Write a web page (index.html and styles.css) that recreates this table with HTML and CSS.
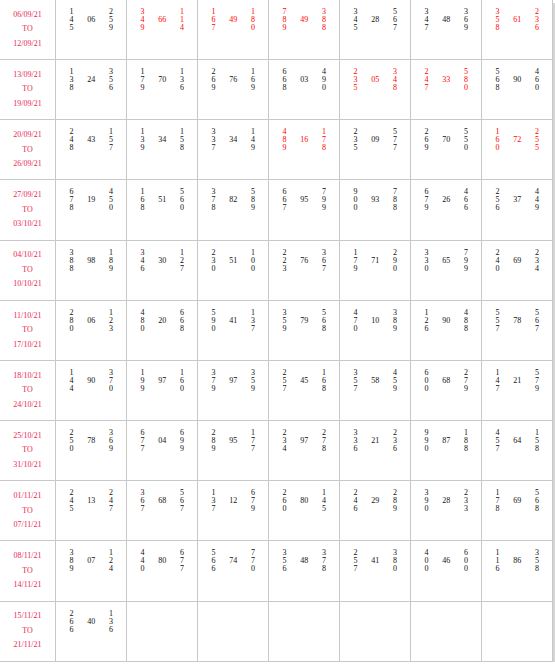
FILE: index.html
```html
<!DOCTYPE html>
<html>
<head>
<meta charset="utf-8">
<title>Chart</title>
<link rel="stylesheet" href="styles.css">
</head>
<body>
<div class="chart">
  <div class="date">06/09/21<br>TO<br>12/09/21</div>
  <div class="cell"><div class="stack">1<br>4<br>5</div><div class="mid">06</div><div class="stack">2<br>5<br>9</div></div>
  <div class="cell hot"><div class="stack">3<br>4<br>9</div><div class="mid">66</div><div class="stack">1<br>1<br>4</div></div>
  <div class="cell hot"><div class="stack">1<br>6<br>7</div><div class="mid">49</div><div class="stack">1<br>8<br>0</div></div>
  <div class="cell hot"><div class="stack">7<br>8<br>9</div><div class="mid">49</div><div class="stack">3<br>8<br>8</div></div>
  <div class="cell"><div class="stack">3<br>4<br>5</div><div class="mid">28</div><div class="stack">5<br>6<br>7</div></div>
  <div class="cell"><div class="stack">3<br>4<br>7</div><div class="mid">48</div><div class="stack">3<br>6<br>9</div></div>
  <div class="cell hot"><div class="stack">3<br>5<br>8</div><div class="mid">61</div><div class="stack">2<br>3<br>6</div></div>

  <div class="date">13/09/21<br>TO<br>19/09/21</div>
  <div class="cell"><div class="stack">1<br>3<br>8</div><div class="mid">24</div><div class="stack">3<br>5<br>6</div></div>
  <div class="cell"><div class="stack">1<br>7<br>9</div><div class="mid">70</div><div class="stack">1<br>3<br>6</div></div>
  <div class="cell"><div class="stack">2<br>6<br>9</div><div class="mid">76</div><div class="stack">1<br>6<br>9</div></div>
  <div class="cell"><div class="stack">6<br>6<br>8</div><div class="mid">03</div><div class="stack">4<br>9<br>0</div></div>
  <div class="cell hot"><div class="stack">2<br>3<br>5</div><div class="mid">05</div><div class="stack">3<br>4<br>8</div></div>
  <div class="cell hot"><div class="stack">2<br>4<br>7</div><div class="mid">33</div><div class="stack">5<br>8<br>0</div></div>
  <div class="cell"><div class="stack">5<br>6<br>8</div><div class="mid">90</div><div class="stack">4<br>6<br>0</div></div>

  <div class="date">20/09/21<br>TO<br>26/09/21</div>
  <div class="cell"><div class="stack">2<br>4<br>8</div><div class="mid">43</div><div class="stack">1<br>5<br>7</div></div>
  <div class="cell"><div class="stack">1<br>3<br>9</div><div class="mid">34</div><div class="stack">1<br>5<br>8</div></div>
  <div class="cell"><div class="stack">3<br>3<br>7</div><div class="mid">34</div><div class="stack">1<br>4<br>9</div></div>
  <div class="cell hot"><div class="stack">4<br>8<br>9</div><div class="mid">16</div><div class="stack">1<br>7<br>8</div></div>
  <div class="cell"><div class="stack">2<br>3<br>5</div><div class="mid">09</div><div class="stack">5<br>7<br>7</div></div>
  <div class="cell"><div class="stack">2<br>6<br>9</div><div class="mid">70</div><div class="stack">5<br>5<br>0</div></div>
  <div class="cell hot"><div class="stack">1<br>6<br>0</div><div class="mid">72</div><div class="stack">2<br>5<br>5</div></div>

  <div class="date">27/09/21<br>TO<br>03/10/21</div>
  <div class="cell"><div class="stack">6<br>7<br>8</div><div class="mid">19</div><div class="stack">4<br>5<br>0</div></div>
  <div class="cell"><div class="stack">1<br>6<br>8</div><div class="mid">51</div><div class="stack">5<br>6<br>0</div></div>
  <div class="cell"><div class="stack">3<br>7<br>8</div><div class="mid">82</div><div class="stack">5<br>8<br>9</div></div>
  <div class="cell"><div class="stack">6<br>6<br>7</div><div class="mid">95</div><div class="stack">7<br>9<br>9</div></div>
  <div class="cell"><div class="stack">9<br>0<br>0</div><div class="mid">93</div><div class="stack">7<br>8<br>8</div></div>
  <div class="cell"><div class="stack">6<br>7<br>9</div><div class="mid">26</div><div class="stack">4<br>6<br>6</div></div>
  <div class="cell"><div class="stack">2<br>5<br>6</div><div class="mid">37</div><div class="stack">4<br>4<br>9</div></div>

  <div class="date">04/10/21<br>TO<br>10/10/21</div>
  <div class="cell"><div class="stack">3<br>8<br>8</div><div class="mid">98</div><div class="stack">1<br>8<br>9</div></div>
  <div class="cell"><div class="stack">3<br>4<br>6</div><div class="mid">30</div><div class="stack">1<br>2<br>7</div></div>
  <div class="cell"><div class="stack">2<br>3<br>0</div><div class="mid">51</div><div class="stack">1<br>0<br>0</div></div>
  <div class="cell"><div class="stack">2<br>2<br>3</div><div class="mid">76</div><div class="stack">3<br>6<br>7</div></div>
  <div class="cell"><div class="stack">1<br>7<br>9</div><div class="mid">71</div><div class="stack">2<br>9<br>0</div></div>
  <div class="cell"><div class="stack">3<br>3<br>0</div><div class="mid">65</div><div class="stack">7<br>9<br>9</div></div>
  <div class="cell"><div class="stack">2<br>4<br>0</div><div class="mid">69</div><div class="stack">2<br>3<br>4</div></div>

  <div class="date">11/10/21<br>TO<br>17/10/21</div>
  <div class="cell"><div class="stack">2<br>8<br>0</div><div class="mid">06</div><div class="stack">1<br>2<br>3</div></div>
  <div class="cell"><div class="stack">4<br>8<br>0</div><div class="mid">20</div><div class="stack">6<br>6<br>8</div></div>
  <div class="cell"><div class="stack">5<br>9<br>0</div><div class="mid">41</div><div class="stack">1<br>3<br>7</div></div>
  <div class="cell"><div class="stack">3<br>5<br>9</div><div class="mid">79</div><div class="stack">5<br>6<br>8</div></div>
  <div class="cell"><div class="stack">4<br>7<br>0</div><div class="mid">10</div><div class="stack">3<br>8<br>9</div></div>
  <div class="cell"><div class="stack">1<br>2<br>6</div><div class="mid">90</div><div class="stack">4<br>8<br>8</div></div>
  <div class="cell"><div class="stack">5<br>5<br>7</div><div class="mid">78</div><div class="stack">5<br>6<br>7</div></div>

  <div class="date">18/10/21<br>TO<br>24/10/21</div>
  <div class="cell"><div class="stack">1<br>4<br>4</div><div class="mid">90</div><div class="stack">3<br>7<br>0</div></div>
  <div class="cell"><div class="stack">1<br>9<br>9</div><div class="mid">97</div><div class="stack">1<br>6<br>0</div></div>
  <div class="cell"><div class="stack">3<br>7<br>9</div><div class="mid">97</div><div class="stack">3<br>5<br>9</div></div>
  <div class="cell"><div class="stack">2<br>5<br>7</div><div class="mid">45</div><div class="stack">1<br>6<br>8</div></div>
  <div class="cell"><div class="stack">3<br>5<br>7</div><div class="mid">58</div><div class="stack">4<br>5<br>9</div></div>
  <div class="cell"><div class="stack">6<br>0<br>0</div><div class="mid">68</div><div class="stack">2<br>7<br>9</div></div>
  <div class="cell"><div class="stack">1<br>4<br>7</div><div class="mid">21</div><div class="stack">5<br>7<br>9</div></div>

  <div class="date">25/10/21<br>TO<br>31/10/21</div>
  <div class="cell"><div class="stack">2<br>5<br>0</div><div class="mid">78</div><div class="stack">3<br>6<br>9</div></div>
  <div class="cell"><div class="stack">6<br>7<br>7</div><div class="mid">04</div><div class="stack">6<br>9<br>9</div></div>
  <div class="cell"><div class="stack">2<br>8<br>9</div><div class="mid">95</div><div class="stack">1<br>7<br>7</div></div>
  <div class="cell"><div class="stack">2<br>3<br>4</div><div class="mid">97</div><div class="stack">2<br>7<br>8</div></div>
  <div class="cell"><div class="stack">3<br>3<br>6</div><div class="mid">21</div><div class="stack">2<br>3<br>6</div></div>
  <div class="cell"><div class="stack">9<br>9<br>0</div><div class="mid">87</div><div class="stack">1<br>8<br>8</div></div>
  <div class="cell"><div class="stack">4<br>5<br>7</div><div class="mid">64</div><div class="stack">1<br>5<br>8</div></div>

  <div class="date">01/11/21<br>TO<br>07/11/21</div>
  <div class="cell"><div class="stack">2<br>4<br>5</div><div class="mid">13</div><div class="stack">2<br>4<br>7</div></div>
  <div class="cell"><div class="stack">3<br>6<br>7</div><div class="mid">68</div><div class="stack">5<br>6<br>7</div></div>
  <div class="cell"><div class="stack">1<br>3<br>7</div><div class="mid">12</div><div class="stack">6<br>7<br>9</div></div>
  <div class="cell"><div class="stack">2<br>6<br>0</div><div class="mid">80</div><div class="stack">1<br>4<br>5</div></div>
  <div class="cell"><div class="stack">2<br>4<br>6</div><div class="mid">29</div><div class="stack">2<br>8<br>9</div></div>
  <div class="cell"><div class="stack">3<br>9<br>0</div><div class="mid">28</div><div class="stack">2<br>3<br>3</div></div>
  <div class="cell"><div class="stack">1<br>7<br>8</div><div class="mid">69</div><div class="stack">5<br>6<br>8</div></div>

  <div class="date">08/11/21<br>TO<br>14/11/21</div>
  <div class="cell"><div class="stack">3<br>8<br>9</div><div class="mid">07</div><div class="stack">1<br>2<br>4</div></div>
  <div class="cell"><div class="stack">4<br>4<br>0</div><div class="mid">80</div><div class="stack">6<br>7<br>7</div></div>
  <div class="cell"><div class="stack">5<br>6<br>6</div><div class="mid">74</div><div class="stack">7<br>7<br>0</div></div>
  <div class="cell"><div class="stack">3<br>5<br>6</div><div class="mid">48</div><div class="stack">3<br>7<br>8</div></div>
  <div class="cell"><div class="stack">2<br>5<br>7</div><div class="mid">41</div><div class="stack">3<br>8<br>0</div></div>
  <div class="cell"><div class="stack">4<br>0<br>0</div><div class="mid">46</div><div class="stack">6<br>0<br>0</div></div>
  <div class="cell"><div class="stack">1<br>1<br>6</div><div class="mid">86</div><div class="stack">3<br>5<br>8</div></div>

  <div class="date">15/11/21<br>TO<br>21/11/21</div>
  <div class="cell"><div class="stack">2<br>6<br>6</div><div class="mid">40</div><div class="stack">1<br>3<br>6</div></div>
  <div class="cell"></div>
  <div class="cell"></div>
  <div class="cell"></div>
  <div class="cell"></div>
  <div class="cell"></div>
  <div class="cell"></div>
</div>
</body>
</html>
```

FILE: styles.css
```css
html, body {
  margin: 0;
  padding: 0;
  background: #ffffff;
}

body {
  font-family: "Liberation Serif", "Times New Roman", serif;
  font-size: 8px;
  color: #111111;
}

.chart {
  display: grid;
  grid-template-columns: 56px repeat(7, 71px);
  grid-auto-rows: 60.17px;
  width: 553px;
  box-shadow: 2px 3px 0 #d6d6d6;
}

.date,
.cell {
  box-sizing: border-box;
  border-right: 1px solid #c8c8c8;
  border-bottom: 1px solid #c8c8c8;
}

.date {
  display: flex;
  align-items: center;
  justify-content: center;
  text-align: center;
  line-height: 14.5px;
  color: #ea1f54;
}

.cell {
  display: flex;
  justify-content: space-between;
  align-items: flex-start;
  padding: 8px 13px 0 13.5px;
  line-height: 8px;
}

.stack {
  text-align: center;
}

.mid {
  margin-top: 8px;
}

.hot {
  color: #ff0000;
}
```
